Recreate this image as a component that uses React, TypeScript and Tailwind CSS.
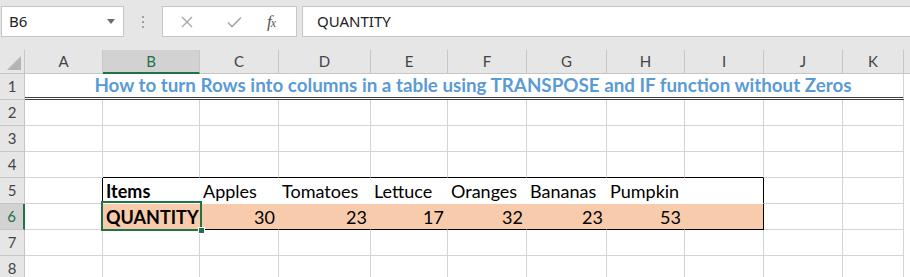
import type { ReactNode } from "react"

const COLS = ["A", "B", "C", "D", "E", "F", "G", "H", "I", "J", "K"]
const W = [
  "w-[78px]",
  "w-[97px]",
  "w-[79px]",
  "w-[92px]",
  "w-[77px]",
  "w-[79px]",
  "w-[80px]",
  "w-[78px]",
  "w-[79px]",
  "w-[79px]",
  "w-[61px]",
]

const ITEMS = ["Apples", "Tomatoes", "Lettuce", "Oranges", "Bananas", "Pumpkin", ""]
const QTY = ["30", "23", "17", "32", "23", "53", ""]

function RowHead({ n, active }: { n: number; active?: boolean }) {
  return (
    <div
      className={
        active
          ? "w-[25px] shrink-0 flex items-center justify-center bg-[#d2d2d2] border-b border-[#c6c6c6] border-r-2 border-r-[#217346] text-[#217346] text-[15px]"
          : "w-[25px] shrink-0 flex items-center justify-center bg-[#e6e6e6] border-b border-r border-[#c6c6c6] text-[#444] text-[15px]"
      }
    >
      {n}
    </div>
  )
}

function Cell({ i, className, children }: { i: number; className?: string; children?: ReactNode }) {
  return (
    <div className={`${W[i]} shrink-0 border-r border-b flex items-end pb-[2px] leading-[20px] whitespace-nowrap ${className ?? "border-[#d4d4d4]"}`}>
      {children}
    </div>
  )
}

function PlainRow({ n }: { n: number }) {
  return (
    <div className="flex h-[26px]">
      <RowHead n={n} />
      {COLS.map((c, i) => (
        <Cell
          key={c}
          i={i}
          className={
            n === 4 && i >= 1 && i <= 8
              ? "border-r-[#d4d4d4] border-b-black"
              : "border-[#d4d4d4]"
          }
        />
      ))}
      <div className="flex-1 bg-white" />
    </div>
  )
}

function FormulaBar() {
  return (
    <div className="h-[50px] flex items-start pt-[6px] font-['Noto_Sans',sans-serif] text-[15px] text-[#222]">
      <div className="ml-px w-[123px] h-[31px] bg-white border border-[#c6c6c6] flex items-center justify-between pl-[7px] pr-[8px]">
        <span>B6</span>
        <span className="w-0 h-0 border-l-[4px] border-r-[4px] border-t-[5px] border-l-transparent border-r-transparent border-t-[#6d6d6d]" />
      </div>
      <div className="w-[38px] h-[31px] flex flex-col items-center justify-center gap-[3px]">
        <span className="w-[2px] h-[2px] bg-[#a0a0a0]" />
        <span className="w-[2px] h-[2px] bg-[#a0a0a0]" />
        <span className="w-[2px] h-[2px] bg-[#a0a0a0]" />
      </div>
      <div className="w-[135px] h-[31px] bg-white border border-[#c6c6c6] flex items-center">
        <svg width="12" height="12" viewBox="0 0 12 12" className="ml-[18px]">
          <path d="M1 1L11 11M11 1L1 11" stroke="#a8a8a8" strokeWidth="1.4" fill="none" />
        </svg>
        <svg width="15" height="12" viewBox="0 0 15 12" className="ml-[34px]">
          <path d="M1 6.5L5 10.5L14 1.5" stroke="#a8a8a8" strokeWidth="1.6" fill="none" />
        </svg>
        <span className="ml-[25px] font-['Liberation_Serif',serif] italic text-[17px] text-[#555] tracking-[-1px]">
          f<span className="text-[12px]">x</span>
        </span>
      </div>
      <div className="ml-[5px] flex-1 h-[31px] bg-white border border-[#c6c6c6] border-r-0 flex items-center pl-[14px]">
        QUANTITY
      </div>
    </div>
  )
}

export default function App() {
  return (
    <div className="w-[910px] h-[277px] overflow-hidden bg-[#e6e6e6] font-['Lato',sans-serif]">
      <FormulaBar />
      <div className="relative bg-white">
        {/* column headers */}
        <div className="flex h-[24px] bg-[#e6e6e6] text-[15px] text-[#444]">
          <div className="w-[25px] shrink-0 border-r border-b border-[#c6c6c6] relative">
            <svg width="14" height="14" viewBox="0 0 14 14" className="absolute right-[3px] bottom-[3px]">
              <path d="M14 0V14H0Z" fill="#b4b4b4" />
            </svg>
          </div>
          {COLS.map((c, i) =>
            i === 1 ? (
              <div key={c} className={`${W[i]} shrink-0 flex items-center justify-center bg-[#d2d2d2] border-r border-[#c6c6c6] border-b-2 border-b-[#217346] text-[#217346]`}>
                {c}
              </div>
            ) : (
              <div key={c} className={`${W[i]} shrink-0 flex items-center justify-center border-r border-b border-[#c6c6c6]`}>
                {c}
              </div>
            )
          )}
          <div className="flex-1 border-b border-[#c6c6c6]" />
        </div>

        {/* row 1 title */}
        <div className="flex h-[26px]">
          <RowHead n={1} />
          <div className="w-[879px] shrink-0 bg-white border-r border-[#d4d4d4] border-b-[3px] border-b-[#3f3f3f] border-double flex items-center justify-center pl-[18px] pb-px text-[18.8px] font-bold text-[#5b9bd5] whitespace-nowrap">
            How to turn Rows into columns in a table using TRANSPOSE and IF function without Zeros
          </div>
          <div className="flex-1 bg-white" />
        </div>

        <PlainRow n={2} />
        <PlainRow n={3} />
        <PlainRow n={4} />

        {/* row 5 */}
        <div className="flex h-[26px] text-[18px] text-black">
          <RowHead n={5} />
          <Cell i={0} className="border-r-black border-b-[#d4d4d4]" />
          <Cell i={1} className="border-r-white border-b-white bg-white pl-[3px] font-bold">
            Items
          </Cell>
          {ITEMS.map((t, k) => (
            <Cell
              key={k}
              i={k + 2}
              className={
                k === 6
                  ? "border-r-black border-b-white bg-white pl-[3px]"
                  : "border-r-white border-b-white bg-white pl-[3px]"
              }
            >
              {t}
            </Cell>
          ))}
          <Cell i={9} />
          <Cell i={10} />
          <div className="flex-1 bg-white" />
        </div>

        {/* row 6 */}
        <div className="flex h-[26px] text-[18px] text-black">
          <RowHead n={6} active />
          <Cell i={0} className="border-r-black border-b-[#d4d4d4]" />
          <Cell i={1} className="border-r-[#f8cbad] border-b-black bg-[#f8cbad] pl-[3px] font-bold">
            QUANTITY
          </Cell>
          {QTY.map((t, k) => (
            <Cell
              key={k}
              i={k + 2}
              className={
                k === 6
                  ? "border-r-black border-b-black bg-[#f8cbad] justify-end pr-[3px]"
                  : "border-r-[#f8cbad] border-b-black bg-[#f8cbad] justify-end pr-[3px]"
              }
            >
              {t}
            </Cell>
          ))}
          <Cell i={9} />
          <Cell i={10} />
          <div className="flex-1 bg-white" />
        </div>

        <PlainRow n={7} />
        <PlainRow n={8} />

        {/* active cell selection */}
        <div className="absolute left-[101px] top-[151px] w-[101px] h-[30px] border-2 border-[#217346]">
          <span className="absolute right-[-5px] bottom-[-5px] w-[7px] h-[7px] bg-[#217346] border border-white" />
        </div>
      </div>
    </div>
  )
}
